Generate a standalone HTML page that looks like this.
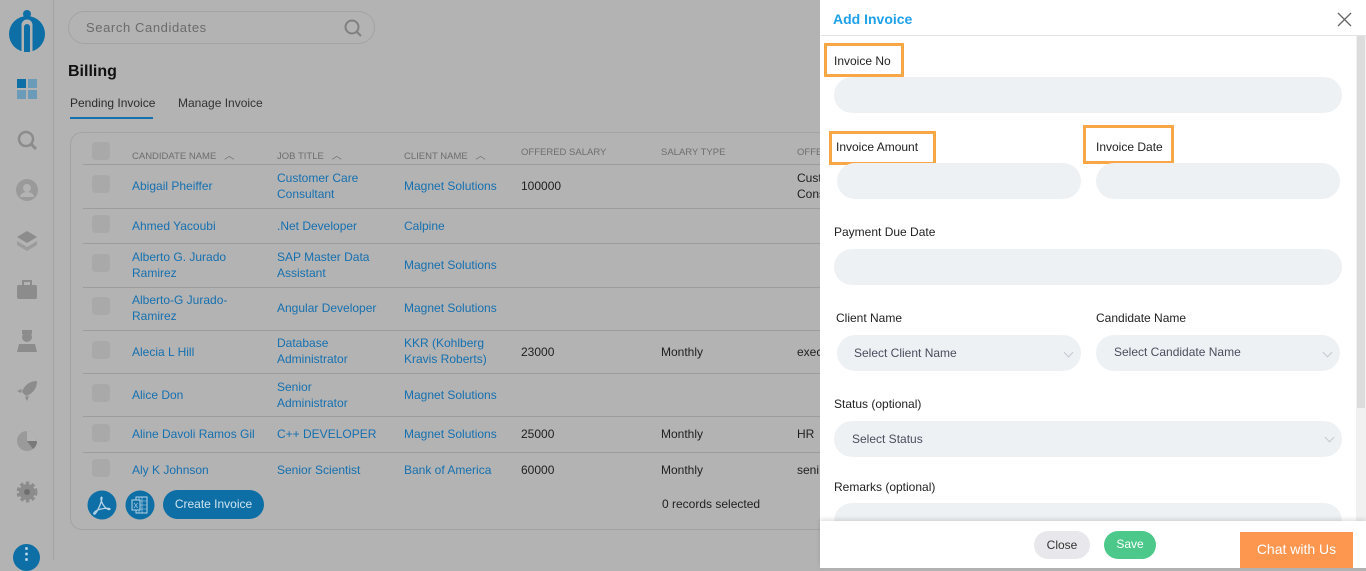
<!DOCTYPE html>
<html><head><meta charset="utf-8"><style>
*{box-sizing:border-box;margin:0;padding:0}
body{width:1366px;height:568px;overflow:hidden;background:#b3b3b3;font-family:"Liberation Sans",sans-serif;position:relative;font-size:12px}
.a{position:absolute}
.lnk{color:#1570b0;font-size:12px;line-height:16px}
.dk{color:#1f1f1f;font-size:12px}
.hd{color:#6e6e6e;font-size:9.5px;top:147px}
.cb{position:absolute;left:92px;width:18px;height:18px;border-radius:4px;background:#a9a9a9}
.rl{position:absolute;left:83px;width:740px;height:1px;background:#9c9c9c}
.lbl{position:absolute;font-size:12px;color:#222}
.inp{position:absolute;background:#eef1f4;border-radius:18px;height:36px}
.ob{position:absolute;border:3px solid #f9a647}
.ph{position:absolute;font-size:12px;color:#4a4d5c}
.chev{position:absolute;width:7px;height:7px;border-right:1px solid #c4c7cc;border-bottom:1px solid #c4c7cc;transform:rotate(45deg)}
</style></head><body>
<div class="a" style="left:53px;top:0;width:1px;height:560px;background:#a3a3a3"></div>
<svg class="a" style="left:8px;top:8px" width="38" height="44" viewBox="0 0 38 44"><circle cx="19" cy="26" r="18" fill="#0d6fa6"/><path d="M13.5 44V17a5.5 5.5 0 0 1 11 0V44z" fill="#b3b3b3"/><circle cx="19" cy="6" r="4" fill="#0d6fa6"/><path d="M16 44V19a3 3 0 0 1 6 0V44z" fill="#0d6fa6"/></svg>
<div class="a" style="left:17px;top:79px;width:9px;height:9px;background:#0d6fa6"></div>
<div class="a" style="left:28px;top:79px;width:9px;height:9px;background:#6a9bb8"></div>
<div class="a" style="left:17px;top:90px;width:9px;height:9px;background:#6a9bb8"></div>
<div class="a" style="left:28px;top:90px;width:9px;height:9px;background:#6a9bb8"></div>
<svg class="a" style="left:16px;top:129px" width="22" height="22"><circle cx="10" cy="10" r="7" fill="none" stroke="#8c8c8c" stroke-width="2.5"/><path d="M15 15l5 5" stroke="#8c8c8c" stroke-width="3"/></svg>
<svg class="a" style="left:15px;top:178px" width="24" height="24"><circle cx="12" cy="12" r="11" fill="#9a9a9a"/><circle cx="12" cy="10" r="4" fill="#b3b3b3"/><path d="M5 19a7 5 0 0 1 14 0z" fill="#b3b3b3"/></svg>
<svg class="a" style="left:15px;top:229px" width="24" height="22"><path d="M12 2l10 6-10 6-10-6z" fill="#8c8c8c"/><path d="M2 12l10 6 10-6v4l-10 6-10-6z" fill="#9c9c9c"/></svg>
<svg class="a" style="left:16px;top:280px" width="22" height="20"><rect x="1" y="5" width="20" height="14" rx="2" fill="#8c8c8c"/><rect x="7" y="1" width="8" height="5" fill="none" stroke="#8c8c8c" stroke-width="2"/></svg>
<svg class="a" style="left:16px;top:329px" width="22" height="24"><rect x="6" y="1" width="10" height="4" fill="#8c8c8c"/><circle cx="11" cy="8" r="5" fill="#8c8c8c"/><path d="M1 23l2-8h16l2 8z" fill="#8c8c8c"/></svg>
<svg class="a" style="left:15px;top:379px" width="24" height="24"><path d="M22 2c-8 0-13 5-15 11l4 4c6-2 11-7 11-15z" fill="#8c8c8c"/><path d="M7 10l-5 2 4 2zM14 17l-2 5-2-4z" fill="#8c8c8c"/></svg>
<svg class="a" style="left:16px;top:430px" width="22" height="22"><circle cx="11" cy="11" r="10" fill="#9a9a9a"/><path d="M11 11V1a10 10 0 0 1 10 10z" fill="#b3b3b3"/><path d="M11 11h10a10 10 0 0 1-4 8z" fill="#7a7a7a"/></svg>
<svg class="a" style="left:16px;top:481px" width="22" height="22"><circle cx="11" cy="11" r="8" fill="#8c8c8c" stroke="#8c8c8c" stroke-width="5" stroke-dasharray="3 2.2"/><circle cx="11" cy="11" r="3" fill="#6f6f6f"/></svg>
<div class="a" style="left:13px;top:544px;width:27px;height:27px;border-radius:50%;background:#0d6fa6;color:#cfe3ef;text-align:center;font-weight:bold;font-size:16px;line-height:22px">⋮</div>
<div class="a" style="left:68px;top:11px;width:307px;height:33px;border:1px solid #a3a3a3;border-radius:17px"></div>
<div class="a" style="left:86px;top:20px;color:#6b6b6b;font-size:13px;letter-spacing:0.6px">Search Candidates</div>
<svg class="a" style="left:343px;top:18px" width="20" height="20"><circle cx="9" cy="9" r="6.5" fill="none" stroke="#808080" stroke-width="2"/><path d="M13 13l5 5" stroke="#808080" stroke-width="2"/></svg>
<div class="a" style="left:68px;top:63px;font-size:16px;font-weight:bold;color:#111">Billing</div>
<div class="a" style="left:70px;top:96px;font-size:12px;color:#2b2b2b">Pending Invoice</div>
<div class="a" style="left:70px;top:117px;width:83px;height:2px;background:#1570b0"></div>
<div class="a" style="left:178px;top:96px;font-size:12px;color:#333">Manage Invoice</div>
<div class="a" style="left:70px;top:132px;width:780px;height:398px;border:1px solid #a3a3a3;border-radius:12px"></div>
<div class="cb" style="top:142px"></div>
<div class="a hd" style="left:132px">CANDIDATE NAME &nbsp; <span style="font-size:10px">︿</span></div>
<div class="a hd" style="left:277px">JOB TITLE &nbsp; <span style="font-size:10px">︿</span></div>
<div class="a hd" style="left:404px">CLIENT NAME &nbsp; <span style="font-size:10px">︿</span></div>
<div class="a hd" style="left:521px">OFFERED SALARY</div>
<div class="a hd" style="left:661px">SALARY TYPE</div>
<div class="a hd" style="left:797px">OFFE</div>
<div class="rl" style="top:164px"></div>
<div class="cb" style="top:175px"></div><div class="a lnk" style="left:132px;top:178px">Abigail Pheiffer</div><div class="a lnk" style="left:277px;top:170px">Customer Care<br>Consultant</div><div class="a lnk" style="left:404px;top:178px">Magnet Solutions</div><div class="a dk" style="left:521px;top:179px">100000</div><div class="a dk" style="left:797px;top:170px;line-height:16px">Cust<br>Cons</div>
<div class="rl" style="top:208px"></div>
<div class="cb" style="top:215px"></div><div class="a lnk" style="left:132px;top:218px">Ahmed Yacoubi</div><div class="a lnk" style="left:277px;top:218px">.Net Developer</div><div class="a lnk" style="left:404px;top:218px">Calpine</div>
<div class="rl" style="top:243px"></div>
<div class="cb" style="top:254px"></div><div class="a lnk" style="left:132px;top:249px">Alberto G. Jurado<br>Ramirez</div><div class="a lnk" style="left:277px;top:249px">SAP Master Data<br>Assistant</div><div class="a lnk" style="left:404px;top:257px">Magnet Solutions</div>
<div class="rl" style="top:287px"></div>
<div class="cb" style="top:297px"></div><div class="a lnk" style="left:132px;top:292px">Alberto-G Jurado-<br>Ramirez</div><div class="a lnk" style="left:277px;top:300px">Angular Developer</div><div class="a lnk" style="left:404px;top:300px">Magnet Solutions</div>
<div class="rl" style="top:330px"></div>
<div class="cb" style="top:341px"></div><div class="a lnk" style="left:132px;top:344px">Alecia L Hill</div><div class="a lnk" style="left:277px;top:335px">Database<br>Administrator</div><div class="a lnk" style="left:404px;top:335px">KKR (Kohlberg<br>Kravis Roberts)</div><div class="a dk" style="left:521px;top:345px">23000</div><div class="a dk" style="left:661px;top:345px">Monthly</div><div class="a dk" style="left:797px;top:345px">exec</div>
<div class="rl" style="top:373px"></div>
<div class="cb" style="top:384px"></div><div class="a lnk" style="left:132px;top:387px">Alice Don</div><div class="a lnk" style="left:277px;top:379px">Senior<br>Administrator</div><div class="a lnk" style="left:404px;top:387px">Magnet Solutions</div>
<div class="rl" style="top:416px"></div>
<div class="cb" style="top:424px"></div><div class="a lnk" style="left:132px;top:426px">Aline Davoli Ramos Gil</div><div class="a lnk" style="left:277px;top:426px">C++ DEVELOPER</div><div class="a lnk" style="left:404px;top:426px">Magnet Solutions</div><div class="a dk" style="left:521px;top:427px">25000</div><div class="a dk" style="left:661px;top:427px">Monthly</div><div class="a dk" style="left:797px;top:427px">HR</div>
<div class="rl" style="top:452px"></div>
<div class="cb" style="top:459px"></div><div class="a lnk" style="left:132px;top:462px">Aly K Johnson</div><div class="a lnk" style="left:277px;top:462px">Senior Scientist</div><div class="a lnk" style="left:404px;top:462px">Bank of America</div><div class="a dk" style="left:521px;top:463px">60000</div><div class="a dk" style="left:661px;top:463px">Monthly</div><div class="a dk" style="left:797px;top:463px">seni</div>
<svg class="a" style="left:87px;top:490px" width="30" height="30"><circle cx="15" cy="15" r="14.5" fill="#0d6fa6"/><path d="M15 7c-2 0-1 5 2 9s6 4 6 3-4-1-9 0-8 4-7 5 4-4 6-9 2-8 2-8" fill="none" stroke="#b9d4e6" stroke-width="1.3"/></svg>
<svg class="a" style="left:125px;top:490px" width="30" height="30"><circle cx="15" cy="15" r="14.5" fill="#0d6fa6"/><rect x="11" y="7" width="11" height="16" fill="none" stroke="#b9d4e6"/><path d="M14 7v16M17 7v16M11 11h11M11 15h11M11 19h11" stroke="#b9d4e6" stroke-width=".6"/><rect x="7" y="10" width="8" height="10" fill="#0d6fa6" stroke="#b9d4e6"/><text x="8.5" y="18" font-size="7" fill="#b9d4e6" font-family="Liberation Sans">X</text></svg>
<div class="a" style="left:163px;top:490px;width:101px;height:29px;border-radius:15px;background:#0d6fa6;color:#cfe3ef;font-size:12px;text-align:center;line-height:29px">Create Invoice</div>
<div class="a dk" style="left:662px;top:497px">0 records selected</div>
<div class="a" style="left:820px;top:0;width:546px;height:568px;background:#fff"></div>
<div class="a" style="left:821px;top:35px;width:545px;height:1px;background:#e3e3e3"></div>
<div class="a" style="left:833px;top:11px;font-size:14px;color:#1ea0ea;font-weight:bold">Add Invoice</div>
<svg class="a" style="left:1337px;top:12px" width="15" height="15"><path d="M1 1l13 13M14 1L1 14" stroke="#666" stroke-width="1.3"/></svg>
<div class="a" style="left:1356px;top:36px;width:10px;height:490px;background:#f1f1f1"></div>
<div class="a" style="left:1357px;top:36px;width:8px;height:372px;background:#dcdcdc"></div>
<div class="ob" style="left:824px;top:43px;width:80px;height:34px"></div>
<div class="lbl" style="left:834px;top:54px">Invoice No</div>
<div class="inp" style="left:834px;top:77px;width:508px"></div>
<div class="ob" style="left:829px;top:131px;width:107px;height:34px"></div>
<div class="lbl" style="left:836px;top:140px">Invoice Amount</div>
<div class="ob" style="left:1083px;top:125px;width:91px;height:39px"></div>
<div class="lbl" style="left:1096px;top:140px">Invoice Date</div>
<div class="inp" style="left:837px;top:163px;width:244px"></div>
<div class="inp" style="left:1096px;top:163px;width:244px"></div>
<div class="lbl" style="left:834px;top:225px">Payment Due Date</div>
<div class="inp" style="left:834px;top:249px;width:508px"></div>
<div class="lbl" style="left:836px;top:311px">Client Name</div>
<div class="lbl" style="left:1096px;top:311px">Candidate Name</div>
<div class="inp" style="left:837px;top:335px;width:244px"></div>
<div class="ph" style="left:854px;top:346px">Select Client Name</div>
<div class="chev" style="left:1065px;top:349px"></div>
<div class="inp" style="left:1096px;top:335px;width:244px"></div>
<div class="ph" style="left:1114px;top:345px">Select Candidate Name</div>
<div class="chev" style="left:1324px;top:349px"></div>
<div class="lbl" style="left:834px;top:397px">Status (optional)</div>
<div class="inp" style="left:834px;top:421px;width:508px"></div>
<div class="ph" style="left:852px;top:432px">Select Status</div>
<div class="chev" style="left:1326px;top:434px"></div>
<div class="lbl" style="left:834px;top:480px">Remarks (optional)</div>
<div class="inp" style="left:834px;top:503px;width:508px;height:40px"></div>
<div class="a" style="left:820px;top:521px;width:546px;height:47px;background:#fff;box-shadow:0 -2px 4px rgba(0,0,0,.12)"></div>
<div class="a" style="left:1034px;top:531px;width:56px;height:28px;border-radius:14px;background:#e8e8ec;color:#333;font-size:12px;text-align:center;line-height:28px">Close</div>
<div class="a" style="left:1104px;top:531px;width:52px;height:28px;border-radius:14px;background:#4cc98a;color:#fff;font-size:12px;text-align:center;line-height:27px">Save</div>
<div class="a" style="left:1240px;top:532px;width:113px;height:36px;background:#fd964e;color:#fff;font-size:14px;text-align:center;line-height:34px">Chat with Us</div>
</body></html>
